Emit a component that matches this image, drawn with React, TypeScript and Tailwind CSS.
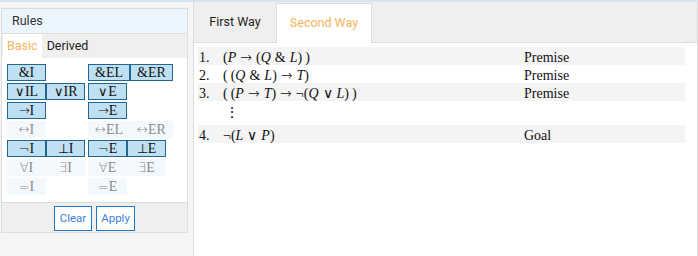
import React from 'react';

type Rule = { sym: string; rest: string; active: boolean };

const r = (sym: string, rest: string, active: boolean): Rule => ({ sym, rest, active });

const ruleRows: [Rule[], Rule[]][] = [
  [[r('&', 'I', true)], [r('&', 'EL', true), r('&', 'ER', true)]],
  [[r('∨', 'IL', true), r('∨', 'IR', true)], [r('∨', 'E', true)]],
  [[r('→', 'I', true)], [r('→', 'E', true)]],
  [[r('↔', 'I', false)], [r('↔', 'EL', false), r('↔', 'ER', false)]],
  [[r('¬', 'I', true), r('⊥', 'I', true)], [r('¬', 'E', true), r('⊥', 'E', true)]],
  [[r('∀', 'I', false), r('∃', 'I', false)], [r('∀', 'E', false), r('∃', 'E', false)]],
  [[r('=', 'I', false)], [r('=', 'E', false)]],
];

const symFont = (s: string) =>
  s === '&' ? '' : "font-['DejaVu_Sans',sans-serif] font-extralight text-[13px]";

const RuleButton = ({ rule }: { rule: Rule }) => (
  <span
    className={
      rule.active
        ? 'min-w-[39px] h-[17px] px-[6px] flex items-center justify-center border border-[#22668f] bg-[#bfe0f3] text-[#111]'
        : 'min-w-[39px] h-[17px] px-[6px] flex items-center justify-center border border-transparent bg-[#f3f8fd] text-[#8c8c8c]'
    }
  >
    <span className={symFont(rule.sym)}>{rule.sym}</span>
    {rule.rest}
  </span>
);

const V = ({ children }: { children: React.ReactNode }) => <i>{children}</i>;
const Op = ({ children }: { children: React.ReactNode }) => (
  <span className="mx-[4px] font-['DejaVu_Sans',sans-serif] font-extralight text-[14px]">{children}</span>
);
const Amp = () => <span className="mx-[4px]">&amp;</span>;
const P = ({ children }: { children: React.ReactNode }) => <span className="ml-[3px]">{children}</span>;

const lines = [
  { n: '1.', f: <>(<V>P</V><Op>→</Op>(<V>Q</V><Amp /><V>L</V>)<P>)</P></>, j: 'Premise' },
  { n: '2.', f: <>(<P>(</P><V>Q</V><Amp /><V>L</V>)<Op>→</Op><V>T</V>)</>, j: 'Premise' },
  { n: '3.', f: <>(<P>(</P><V>P</V><Op>→</Op><V>T</V>)<Op>→</Op>¬(<V>Q</V><Op>∨</Op><V>L</V>)<P>)</P></>, j: 'Premise' },
];

const App = () => {
  return (
    <div className="w-[698px] h-[256px] overflow-hidden bg-[#f5f5f5] border-t-2 border-[#d6e4f1] flex font-['Roboto',sans-serif]">
      {/* Rules column */}
      <div className="w-[194px] shrink-0 border-r border-[#dcdcdc] pt-[6px] pl-px">
        <div className="w-[187px] border border-[#dddddd] bg-white">
          <div className="h-[25px] bg-[#eaf5fe] border-b border-[#dddddd] pl-[10px] flex items-center text-[12.5px] text-[#333]">
            Rules
          </div>
          <div className="h-[24px] bg-[#efefef] flex items-end text-[12.5px]">
            <span className="ml-px h-[24px] px-[4px] bg-white flex items-center text-[#f7b35c]">Basic</span>
            <span className="h-[24px] px-[5px] flex items-center text-[#222]">Derived</span>
          </div>
          <div className="pt-[6px] pb-[7px] pl-[5px] flex flex-col gap-[2px] font-['Liberation_Serif','DejaVu_Serif',serif] text-[14px] leading-none">
            {ruleRows.map(([left, right], i) => (
              <div key={i} className="flex">
                <div className="w-[81px] flex">
                  {left.map((x) => (
                    <RuleButton key={x.sym + x.rest} rule={x} />
                  ))}
                </div>
                <div className="flex">
                  {right.map((x) => (
                    <RuleButton key={x.sym + x.rest} rule={x} />
                  ))}
                </div>
              </div>
            ))}
          </div>
          <div className="h-[30px] bg-[#efefef] border-t border-[#dddddd] flex justify-center items-start pt-[3px] gap-[4px] text-[11.5px] text-[#3f7fd6]">
            <button className="w-[38px] h-[25px] border border-[#1f77c9] bg-white">Clear</button>
            <button className="w-[39px] h-[25px] border border-[#1f77c9] bg-white">Apply</button>
          </div>
        </div>
      </div>

      {/* Proof column */}
      <div className="flex-1 bg-white border-r border-[#dcdcdc] flex flex-col">
        <div className="h-[41px] shrink-0 bg-[#efefef] border-b border-[#dddddd] flex items-end text-[12.5px]">
          <span className="h-[39px] w-[82px] flex items-center justify-center text-[#222]">First Way</span>
          <span className="h-[40px] w-[96px] -mb-px bg-white border-x border-t border-[#dddddd] flex items-center justify-center text-[#f7b35c]">
            Second Way
          </span>
        </div>
        <div className="pt-[4px] pl-[4px] pr-[12px] font-['Liberation_Serif','DejaVu_Serif',serif] text-[14px] text-[#111]">
          {lines.map((l, i) => (
            <div key={l.n} className={`h-[18px] grid grid-cols-[24px_301px_1fr] items-center pl-px ${i % 2 === 0 ? 'bg-[#f4f4f4]' : 'bg-white'}`}>
              <span>{l.n}</span>
              <span className="leading-none">{l.f}</span>
              <span>{l.j}</span>
            </div>
          ))}
          <div className="h-[24px] grid grid-cols-[24px_301px_1fr] items-center pl-px">
            <span></span>
            <span className="pl-[2px] leading-none">⋮</span>
            <span></span>
          </div>
          <div className="h-[18px] grid grid-cols-[24px_301px_1fr] items-center pl-px bg-[#f4f4f4]">
            <span>4.</span>
            <span className="leading-none">¬(<V>L</V><Op>∨</Op><V>P</V>)</span>
            <span>Goal</span>
          </div>
        </div>
      </div>
    </div>
  );
};

export default App;
